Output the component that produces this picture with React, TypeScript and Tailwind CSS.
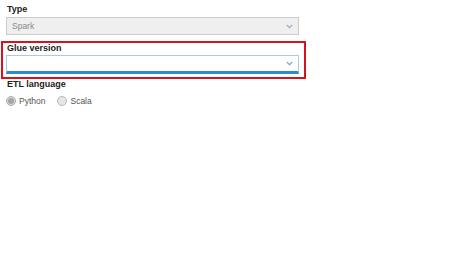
import React from "react";

function Chevron({ color }: { color: string }) {
  return (
    <svg width="7" height="5" viewBox="0 0 7 5" fill="none">
      <path d="M0.8 1 L3.5 3.7 L6.2 1" stroke={color} strokeWidth="1.1" />
    </svg>
  );
}

export default function App() {
  return (
    <div className="w-[474px] h-[269px] bg-white font-['Liberation_Sans',Arial,sans-serif] text-[#222]">
      <div className="pl-[6px] pt-[4px]">
        <div className="pl-[1px] text-[9px] font-bold leading-[11px] text-[#222]">Type</div>
        <div className="mt-[2px] w-[293px] h-[18px] bg-[#efefef] border border-[#cbcbcb] flex items-center justify-between pl-[5px] pr-[5px]">
          <span className="text-[8.5px] text-[#8a8a8a]">Spark</span>
          <Chevron color="#8fb0c8" />
        </div>
      </div>
      <div className="ml-[1px] mt-[6px] w-[305px] border-2 border-[#d5121e] pl-[3px] pb-[3px]">
        <div className="pl-[1px] text-[9px] font-bold leading-[10px] text-[#222]">Glue version</div>
        <div className="mt-[2px] w-[293px] h-[19px] bg-white border border-[#a9cbe6] border-b-[3px] border-b-[#2e8bc9] flex items-center justify-end pr-[5px]">
          <Chevron color="#7ea3c0" />
        </div>
      </div>
      <div className="pl-[7px] text-[9px] font-bold leading-[11px] text-[#222]">ETL language</div>
      <div className="pl-[6px] mt-[6px] flex items-center text-[8.5px] text-[#555] leading-[10px]">
        <span className="w-[10px] h-[10px] rounded-full border border-[#b0b0b0] bg-[#d8d8d8] flex items-center justify-center">
          <span className="w-[6px] h-[6px] rounded-full bg-[#a5a5a5]" />
        </span>
        <span className="ml-[3px]">Python</span>
        <span className="ml-[12px] w-[10px] h-[10px] rounded-full border border-[#b8b8b8] bg-[#e6e6e6]" />
        <span className="ml-[3px]">Scala</span>
      </div>
    </div>
  );
}
